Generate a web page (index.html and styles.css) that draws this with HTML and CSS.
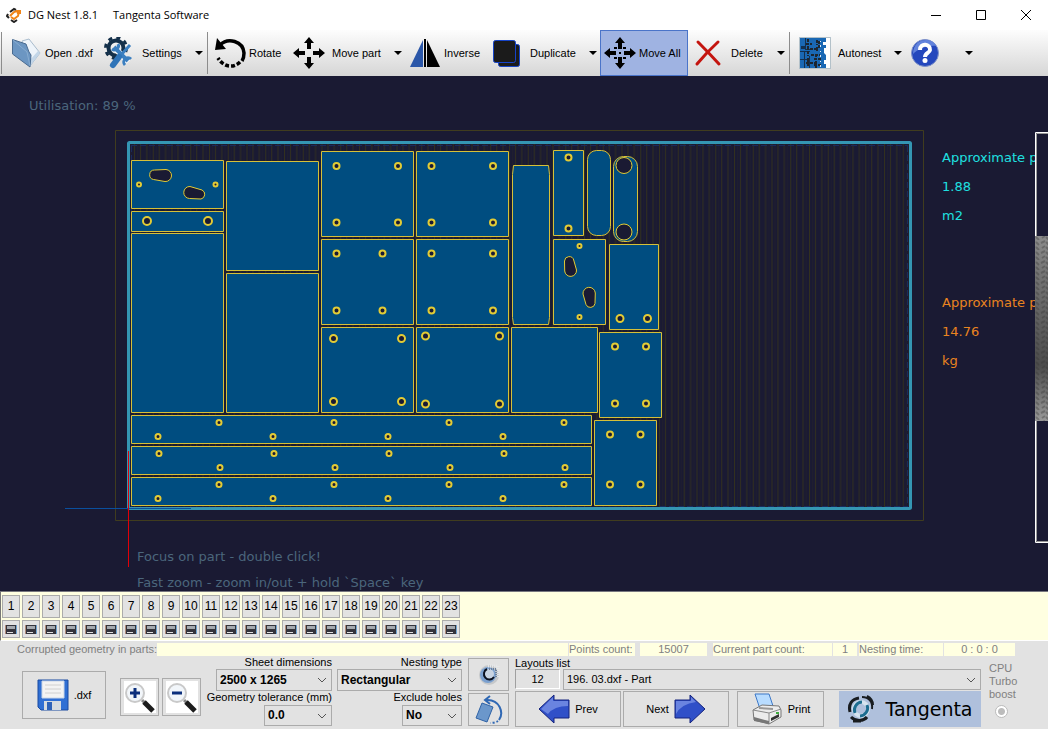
FILE: index.html
```html
<!DOCTYPE html>
<html lang="en">
<head>
  <meta charset="utf-8">
  <title>DG Nest 1.8.1</title>
  <link rel="stylesheet" href="styles.css">
</head>
<body>

<!-- shared symbols -->
<svg class="defs" aria-hidden="true">
  <symbol id="disk" viewBox="0 0 12 9">
    <path d="M0 0h12v9H0z" fill="#34343c"/>
    <path d="M2 1h8v3H2z" fill="#a4a8ae"/>
    <path d="M2 7h6v1H2z" fill="#e0e0e0"/>
    <path d="M0 0h1v9H0z" fill="#b08a78"/>
    <path d="M11 0h1v9h-1z" fill="#6fa3cf"/>
  </symbol>
  <symbol id="move" viewBox="0 0 32 32">
    <path d="M16 0l5 6h-3v6h-4V6h-3zM16 32l5-6h-3v-6h-4v6h-3zM0 16l6-5v3h6v4H6v3zM32 16l-6-5v3h-6v4h6v3z"/>
  </symbol>
</svg>

<header class="titlebar">
  <svg class="logo" width="16" height="16" viewBox="0 0 16 16">
    <path d="M4 5l4-3 2 1M2 7l-1 2 2 2M5 13l3 2 3-2" fill="none" stroke="#222" stroke-width="2"/>
    <path d="M4 9l4-4 3-1M13 5l-1 4-4 3-3-2" fill="none" stroke="#f08418" stroke-width="2"/>
    <path d="M10 3h5v4h-4z" fill="#f08418"/>
  </svg>
  <h1>DG Nest 1.8.1</h1>
  <span class="vendor">Tangenta Software</span>
  <div class="win">
    <button aria-label="Minimize"><svg width="12" height="12"><path d="M1 6.500h10" stroke="#000"/></svg></button>
    <button aria-label="Maximize"><svg width="12" height="12"><path d="M1.500 1.500h9v9h-9z" fill="none" stroke="#000"/></svg></button>
    <button aria-label="Close"><svg width="12" height="12"><path d="M1 1l10 10M11 1L1 11" stroke="#000"/></svg></button>
  </div>
</header>

<nav class="toolbar">
  <i class="sep"></i>
  <div class="tool open">
    <button class="tight">
      <svg width="32" height="32" viewBox="0 0 32 32">
        <path d="M12 4l7-2 11 14-10 13z" fill="#eef4fa" stroke="#a9bccd"/>
        <path d="M20 29l10-13-2-2-8 9z" fill="#c3d6e8"/>
        <path d="M2.500 2.500L10 5l6 2 3 8 2 3-1 12L2.500 17z" fill="#6c96c2" stroke="#4a6b90"/>
        <path d="M3 3l14 12 3 14" fill="none" stroke="#88acd0"/>
      </svg>
      Open .dxf
    </button>
  </div>
  <div class="tool settings">
    <button>
      <svg width="32" height="32" viewBox="0 0 32 32">
        <circle cx="13" cy="11" r="7.500" fill="none" stroke="#14304a" stroke-width="4"/>
        <circle cx="13" cy="11" r="10.500" fill="none" stroke="#14304a" stroke-width="3" stroke-dasharray="4 4.250"/>
        <path d="M12 11l13 14" stroke="#fff" stroke-width="6"/>
        <path d="M11 10l14 14" stroke="#3b7fc0" stroke-width="4"/>
        <path d="M9 12a4 4 0 0 0 6-5M22 28a4 4 0 0 1 6-6" fill="none" stroke="#3b7fc0" stroke-width="3"/>
        <path d="M27 8l-9 10" stroke="#3b7fc0" stroke-width="3"/>
        <path d="M16 20l-6 8" stroke="#2f74b8" stroke-width="6" stroke-linecap="round"/>
      </svg>
      Settings
    </button>
    <button class="drop" aria-label="Settings options"></button>
  </div>
  <i class="sep"></i>
  <div class="tool rotate">
    <button class="tight">
      <svg width="32" height="32" viewBox="0 0 32 32">
        <path d="M6 8c8-8 23-4 24 8q0 5-2 8" fill="none" stroke="#000" stroke-width="3.500"/>
        <path d="M3 1l9 11-11 1z"/>
        <path d="M26 25c-6 6-16 6-22-4" fill="none" stroke="#000" stroke-width="3.500" stroke-dasharray="4 2"/>
      </svg>
      Rotate
    </button>
  </div>
  <div class="tool move">
    <button><svg width="32" height="32"><use href="#move"/></svg>Move part</button>
    <button class="drop" aria-label="Move options"></button>
  </div>
  <div class="tool inverse">
    <button class="tight">
      <svg width="32" height="32" viewBox="0 0 32 32">
        <path d="M14 3v27H1z" fill="#2a56a8"/>
        <path d="M15 2h2v28h-2z"/>
        <path d="M18 3l13 27H18z"/>
      </svg>
      Inverse
    </button>
  </div>
  <div class="tool duplicate">
    <button>
      <svg width="32" height="32" viewBox="0 0 32 32">
        <rect x="7.500" y="7.500" width="21" height="22" rx="2" fill="#1b1b1b" stroke="#1644c8"/>
        <rect x="2.500" y="3.500" width="22" height="22" rx="2" fill="#1b1b1b" stroke="#1644c8"/>
      </svg>
      Duplicate
    </button>
    <button class="drop" aria-label="Duplicate options"></button>
  </div>
  <div class="tool moveall active">
    <button class="tight">
      <svg width="32" height="32" viewBox="0 0 32 32">
        <use href="#move"/>
        <path d="M12 12h8v8h-8z" fill="#9fb3e2"/>
        <path d="M15 15h2v2h-2zM10 10h3v2h-3zM19 10h3v2h-3zM10 20h3v2h-3zM19 20h3v2h-3z"/>
      </svg>
      Move All
    </button>
  </div>
  <div class="tool delete">
    <button>
      <svg width="32" height="32" viewBox="0 0 32 32"><path d="M6 5q11 11 21 22M26 5Q15 15 5 27" fill="none" stroke="#c4150f" stroke-width="3" stroke-linecap="round"/></svg>
      Delete
    </button>
    <button class="drop" aria-label="Delete options"></button>
  </div>
  <i class="sep"></i>
  <div class="tool autonest">
    <button>
      <svg width="32" height="32" viewBox="0 0 32 32">
        <path d="M.5.5h31v31H.5z" fill="#1a68b4" stroke="#b3c1c9"/>
        <path d="M27 1h4v30h-4v-4h-2v-4h2v-5l-2-2v-5h2V8h-3V5h3z" fill="#fff"/>
        <path d="M2 9h4v3H2zM6 1h1v11h4v1H6zM1 14h10v1H1zM5 15h1v16H5zM1 22h9v1H1zM10 19h1v12h-1z" fill="#14304f"/>
        <path d="M9 2v28M18 3v12M17 17v14" stroke="#1d2630" stroke-width="2" stroke-dasharray="3 1 1 2 4 1"/>
        <path d="M7 7h6M11 12h7M12 18h9M7 26h11M15 22h8M15 28h7M20 4v7" stroke="#1d2630" stroke-width="2" stroke-dasharray="3 1"/>
        <path d="M21.500 4v26" stroke="#dfe9f2" stroke-dasharray="1 3 2 4"/>
      </svg>
      Autonest
    </button>
    <button class="drop" aria-label="Autonest options"></button>
  </div>
  <div class="tool help">
    <button aria-label="Help">
      <svg width="32" height="32" viewBox="0 0 32 32">
        <circle cx="16" cy="16" r="13.500" fill="#2548bd" stroke="#8093c9"/>
        <path d="M4 17C4 0 24 0 27 9 18 8 9 12 4 17z" fill="#6283dc"/>
        <path d="M11 13c0-8 11-6 10 0-.5 3-5 3-5 7" fill="none" stroke="#fff" stroke-width="4"/>
        <circle cx="16" cy="23.500" r="2.500" fill="#fff"/>
      </svg>
    </button>
    <button class="drop" aria-label="Help options"></button>
  </div>
</nav>

<main class="stage">
  <svg viewBox="0 76 1048 514" preserveAspectRatio="xMinYMin meet">
    <defs>
      <pattern id="ribs" x="134" y="0" width="18.750" height="10" patternUnits="userSpaceOnUse">
        <path d="M.5 0v10M6.500 0v10M12.800 0v10" stroke="#32301f"/>
        <path d="M3.500 0v10M16 0v10" stroke="#1f1e2e"/>
      </pattern>
      <linearGradient id="steel" x1="0" y1="0" x2="0" y2="1">
        <stop offset="0" stop-color="#8c8c8c"/><stop offset=".2" stop-color="#747474"/>
        <stop offset=".7" stop-color="#4c4c4c"/><stop offset="1" stop-color="#989898"/>
      </linearGradient>
      <pattern id="tread" width="10" height="10" patternUnits="userSpaceOnUse">
        <path d="M1 3l4-2M6 2l3 3M2 8l3-2M6 7l3 3" stroke="#333" stroke-opacity=".35" stroke-width="2"/>
      </pattern>
    </defs>

    <!-- sheet -->
    <path d="M115.500 130.500h808v390h-808z" fill="none" stroke="#403c1e"/>
    <path d="M130 144h779v363H130z" fill="url(#ribs)"/>
    <path d="M131 145.500h777M907.500 146v361M131.500 146v361M660 506.500h248" fill="none" stroke="#1a2b5c" stroke-dasharray="6 3"/>
    <rect x="128.500" y="142.500" width="782" height="366" rx="1" fill="none" stroke="#3496b3" stroke-width="3"/>

    <!-- parts -->
    <g class="part">
      <path d="M131.500 160.500h92v48h-92zM131.500 211.500h92v20h-92zM131.500 233.500h92v179h-92z"/>
      <path d="M226.500 161.500h92v109h-92zM226.500 273.500h92v139h-92z"/>
      <path d="M321.500 151.500h92v85h-92zM321.500 239.500h92v85h-92zM321.500 327.500h92v85h-92z"/>
      <path d="M416.500 151.500h92v85h-92zM416.500 239.500h92v85h-92zM416.500 327.500h92v85h-92z"/>
      <path d="M513.500 165.500h35l1 9v143l-1 7h-35l-1-7v-143z"/>
      <path d="M511.500 327.500h86v85h-86z"/>
      <path d="M553.500 150.500h30v85h-30zM553.500 239.500h52v85h-52z"/>
      <rect x="587.500" y="150.500" width="23" height="85" rx="9"/>
      <rect x="613.500" y="156.500" width="24" height="85" rx="10"/>
      <path d="M609.500 244.500h49v85h-49zM599.500 332.500h62v85h-62zM594.500 420.500h62v85h-62z"/>
      <path d="M131.500 415.500h460v28h-460zM131.500 446.500h460v28h-460zM131.500 477.500h460v28h-460z"/>
    </g>

    <!-- cutouts -->
    <g class="cut">
      <path d="M154.500 170l11.500-.5a6 6 0 0 1-1 12l-11.500-2a4.800 4.800 0 0 1 1-9.500z"/>
      <path d="M190 186.500l12 3.500a4.800 4.800 0 0 1-1 9l-11.500-.5a6 6 0 0 1 .5-12z"/>
      <path d="M564.500 261a4.700 4.700 0 0 1 9.200-1l2.800 10a5.800 5.800 0 0 1-11.800 1z"/>
      <path d="M583 294a6 6 0 0 1 12.300-1l-.3 10.500a4.700 4.700 0 0 1-9 1z"/>
      <circle cx="624" cy="165.500" r="8"/>
      <circle cx="624" cy="232" r="8"/>
    </g>
    <g class="cut holes"></g>

    <!-- origin -->
    <path d="M65 508.500h126" stroke="#0a4f9e"/>
    <path d="M128.500 451v116" stroke="#e00008"/>

    <g class="note">
      <text x="29" y="110">Utilisation: 89 %</text>
      <text x="137" y="561">Focus on part - double click!</text>
      <text x="137" y="587">Fast zoom - zoom in/out + hold `Space` key</text>
    </g>
    <g class="note area">
      <text x="942" y="162">Approximate pa</text>
      <text x="942" y="191">1.88</text>
      <text x="942" y="220">m2</text>
    </g>
    <g class="note weight">
      <text x="942" y="307">Approximate pa</text>
      <text x="942" y="336">14.76</text>
      <text x="942" y="365">kg</text>
    </g>

    <!-- side preview -->
    <path d="M1035 132h20v411h-20z" fill="#1a1a33"/>
    <path d="M1055 132.500h-19.500v410h19.500" fill="none" stroke="#fff"/>
    <path d="M1055 133.500h-18.500v408h18.500" fill="none" stroke="#999"/>
    <path d="M1035 236h20v185h-20z" fill="url(#steel)"/>
    <path d="M1035 236h20v185h-20z" fill="url(#tread)"/>
  </svg>
</main>

<section class="strip">
  <div class="cells numbers"></div>
  <div class="cells disks"></div>
</section>

<footer class="panel">
  <div class="status">
    <span class="caption">Corrupted geometry in parts:</span>
    <output class="bad" aria-label="Corrupted geometry"></output>
    <span class="field points">Points count:</span>
    <output class="field pointsval">15007</output>
    <span class="field current">Current part count:</span>
    <output class="field currentval">1</output>
    <span class="field time">Nesting time:</span>
    <output class="field timeval">0 : 0 : 0</output>
  </div>

  <div class="controls">
    <button class="btn save">
      <svg width="32" height="32" viewBox="0 0 32 32">
        <path d="M1 1h30v30H4l-3-3z" fill="#2f6fd4" stroke="#1b4ba0"/>
        <path d="M5 2h22v17H5z" fill="#f3f3f3" stroke="#c9d6e8"/>
        <path d="M8 6h16M8 10h16M8 14h16" stroke="#d0d0d0"/>
        <path d="M7 22h17v9H7z" fill="#d5dbe0"/>
        <path d="M10 23h5v8h-5z" fill="#2d62b8"/>
      </svg>
      .dxf
    </button>

    <div class="zooms">
      <button class="btn" aria-label="Zoom in">
        <svg width="32" height="32" viewBox="0 0 32 32">
          <path d="M0 0h32v32H0z" fill="#fff"/>
          <path d="M18 19l3 3" stroke="#888" stroke-width="3"/>
          <path d="M20 21l9 9" stroke="#1c1c1c" stroke-width="5"/>
          <circle cx="11" cy="12" r="9" fill="#f2f6fa" stroke="#c9c9c9" stroke-width="2"/>
          <path d="M6 12h10M11 7v10" stroke="#0c2f7c" stroke-width="3"/>
        </svg>
      </button>
      <button class="btn" aria-label="Zoom out">
        <svg width="32" height="32" viewBox="0 0 32 32">
          <path d="M0 0h32v32H0z" fill="#fff"/>
          <path d="M18 19l3 3" stroke="#888" stroke-width="3"/>
          <path d="M20 21l9 9" stroke="#1c1c1c" stroke-width="5"/>
          <circle cx="11" cy="12" r="9" fill="#f2f6fa" stroke="#c9c9c9" stroke-width="2"/>
          <path d="M6 12h10" stroke="#0c2f7c" stroke-width="3"/>
        </svg>
      </button>
    </div>

    <div class="options sheet">
      <label for="dims">Sheet dimensions</label>
      <select id="dims"><option>2500 x 1265</option></select>
      <label for="tol">Geometry tolerance (mm)</label>
      <select id="tol" class="short"><option>0.0</option></select>
    </div>

    <div class="options nesting">
      <label for="type">Nesting type</label>
      <select id="type"><option>Rectangular</option></select>
      <label for="holes">Exclude holes</label>
      <select id="holes" class="short"><option>No</option></select>
    </div>

    <div class="modes">
      <button class="btn" aria-label="Hole mode">
        <svg width="24" height="24" viewBox="0 0 24 24">
          <circle cx="12" cy="12" r="10" fill="#c6c8ca"/>
          <circle cx="11" cy="12" r="8" fill="#7ba0cf"/>
          <circle cx="12" cy="11" r="5" fill="#c9d4e2"/>
          <path d="M10 6a5.500 5.500 0 1 0 7 8" fill="none" stroke="#0c1220" stroke-width="2"/>
          <path d="M11 3h10v11" fill="none" stroke="#e6e8ea" stroke-width="3" stroke-dasharray="1 1"/>
          <path d="M12 6h7v8" fill="none" stroke="#6b7f99" stroke-width="2" stroke-dasharray="1 1"/>
        </svg>
      </button>
      <button class="btn" aria-label="Rotate part">
        <svg width="30" height="30" viewBox="0 0 30 30">
          <path d="M8 8l11 4-6 15-11-4z" fill="#6b97cb" stroke="#2f62a5"/>
          <path d="M12 5c14-1 18 13 13 20" fill="none" stroke="#2f68b4" stroke-width="2"/>
          <path d="M16 1l-5 4 5 4" fill="none" stroke="#2f68b4" stroke-width="2"/>
          <path d="M24 26q-3 2-8 2" fill="none" stroke="#2f68b4" stroke-width="2" stroke-dasharray="2 2"/>
        </svg>
      </button>
    </div>

    <div class="layouts">
      <label for="layout">Layouts list</label>
      <div class="list">
        <input type="text" value="12" aria-label="Layout number">
        <select id="layout"><option>196. 03.dxf - Part</option></select>
      </div>
      <div class="actions">
        <button class="btn step">
          <svg width="32" height="30" viewBox="0 0 32 30">
            <path d="M1 15L16 1v5h15v18H16v5z" fill="#3050c8" stroke="#15237c"/>
            <path d="M3 15L15 3v4h15v5q-14 0-20 8z" fill="#6a84e0"/>
          </svg>
          Prev
        </button>
        <button class="btn step">
          Next
          <svg width="32" height="30" viewBox="0 0 32 30">
            <path d="M31 15L16 1v5H1v18h15v5z" fill="#3050c8" stroke="#15237c"/>
            <path d="M2 7h15V3l5 5Q7 10 2 20z" fill="#6a84e0"/>
          </svg>
        </button>
        <button class="btn print">
          <svg width="32" height="32" viewBox="0 0 32 32">
            <path d="M4 1h14l4 12-13 3z" fill="#b8dcff" stroke="#3d78c8"/>
            <path d="M2 17l9-5 17 1 2 4v7L18 31 3 27z" fill="#ececec" stroke="#777"/>
            <path d="M2 17l16 3 12-4M18 20v11" fill="none" stroke="#888"/>
            <path d="M3 24l15 4v3L3 28z" fill="#777"/>
            <path d="M20 25l8-4v3l-8 4z" fill="#333"/>
            <path d="M8 15l14 1" stroke="#999" stroke-width="2"/>
            <path d="M25 20h3" stroke="#3dab3d" stroke-width="2"/>
          </svg>
          Print
        </button>
        <a class="brand" href="#">
          <svg width="28" height="28" viewBox="0 0 28 28">
            <circle cx="14" cy="14" r="7" fill="none" stroke="#d6e4ef" stroke-width="4"/>
            <path d="M8 18a8 8 0 0 1 7-11M20 10a8 8 0 0 1-7 11" fill="none" stroke="#1d6d90" stroke-width="3"/>
            <path d="M3 17C1 9 5 4 12 3" fill="none" stroke="#181c20" stroke-width="3"/>
            <path d="M15 2c7 0 11 5 10 12M20 1c4 2 6 5 6 9" fill="none" stroke="#181c20" stroke-width="2"/>
            <path d="M4 22c5 5 13 4 16 0M6 26h8" fill="none" stroke="#181c20" stroke-width="3"/>
          </svg>
          Tangenta
        </a>
      </div>
    </div>

    <label class="turbo">
      CPU<br>Turbo<br>boost
      <input type="radio" checked disabled>
    </label>
  </div>
</footer>

<script>

// [x, y, radius]
var holes = [
  [139, 184.5, 2], [215.5, 184.5, 2], [147, 221, 4], [208, 221, 4],
  [336.5, 166, 3], [398, 166, 3], [336.5, 222.5, 3], [398, 222.5, 3],
  [336.5, 253.5, 3], [382.5, 253.5, 3], [336.5, 310.5, 3], [382.5, 310.5, 3],
  [333.5, 338.5, 3.5], [401.5, 338.5, 3.5], [333.5, 401.5, 3.5], [401.5, 401.5, 3.5],
  [431.5, 166, 3], [493, 166, 3], [431.5, 222.5, 3], [493, 222.5, 3],
  [431.5, 253.5, 3], [493, 253.5, 3], [431.5, 310.5, 3], [493, 310.5, 3],
  [425.5, 336, 3.5], [499.5, 336, 3.5], [425.5, 404, 3.5], [499.5, 404, 3.5],
  [568.5, 157.5, 3], [568.5, 228.5, 3], [579.5, 246, 2], [579.5, 317, 2],
  [620, 318.5, 3.5], [647.5, 318.5, 3.5],
  [615, 346.5, 3], [646, 346.5, 3], [615, 403.5, 3], [646, 403.5, 3],
  [610, 434.5, 3], [640.5, 434.5, 3], [610, 484.5, 3], [640.5, 484.5, 3]
];

// long bars, four holes on each edge
for (var i = 0; i < 4; i++) {
  var x = i * 115;
  holes.push([219 + x, 422.5, 2.5], [158 + x, 436.5, 2.5]);
  holes.push([159 + x, 453.5, 2.5], [220 + x, 467.5, 2.5]);
  holes.push([219 + x, 484.5, 2.5], [158 + x, 498.5, 2.5]);
}

document.querySelector('.holes').innerHTML = holes.map(function(h){
  return '<circle cx="' + h[0] + '" cy="' + h[1] + '" r="' + h[2] + '"/>';
}).join('');

var numbers = '', disks = '';
for (var n = 1; n <= 23; n++) {
  numbers += '<button>' + n + '</button>';
  disks += '<button aria-label="Save part ' + n + '"><svg width="12" height="9"><use href="#disk"/></svg></button>';
}
document.querySelector('.numbers').innerHTML = numbers;
document.querySelector('.disks').innerHTML = disks;

</script>

</body>
</html>
```
FILE: styles.css
```css
* {
  box-sizing: border-box;
}
body {
  margin: 0;
  height: 100vh;
  display: flex;
  flex-direction: column;
  overflow: hidden;
  background: #e2e2e2;
  color: #000;
  font: 11px/13px "Liberation Sans", Arial, sans-serif;
}
button,
input,
select {
  font: inherit;
  color: inherit;
  margin: 0;
  padding: 0;
  border: 0;
  border-radius: 0;
  background: none;
}
svg {
  display: block;
  flex: none;
}
.defs {
  position: absolute;
  width: 0;
  height: 0;
}

/* title bar */
.titlebar {
  display: flex;
  align-items: center;
  height: 30px;
  padding-left: 6px;
  background: #fff;
  font: 11px/16px "Open Sans", "Noto Sans", sans-serif;
}
.titlebar h1 {
  margin: 0 15px 0 6px;
  font: inherit;
}
.win {
  display: flex;
  margin-left: auto;
}
.win button {
  width: 45px;
  height: 28px;
  display: flex;
  justify-content: center;
  align-items: center;
}

/* toolbar */
.toolbar {
  display: flex;
  height: 46px;
  background: linear-gradient(#fdfdfd, #d6d6d6);
}
.sep {
  width: 1px;
  height: 42px;
  margin: 2px 0 0 1px;
  background: #8c8c8c;
}
.tool {
  display: flex;
  justify-content: space-between;
  padding-left: 4px;
  white-space: nowrap;
}
.tool button {
  display: flex;
  align-items: center;
  gap: 7px;
}
.tool .tight {
  gap: 3px;
}
.tool .drop {
  width: 14px;
  justify-content: center;
}
.drop:after {
  content: '';
  border: 4px solid transparent;
  border-top-color: #000;
  border-bottom: 0;
}
.open {
  width: 97px;
  padding-left: 8px;
}
.settings {
  width: 107px;
}
.rotate {
  width: 81px;
  padding-left: 6px;
}
.move {
  width: 116px;
}
.inverse {
  width: 80px;
}
.duplicate {
  width: 115px;
  padding-left: 6px;
}
.moveall {
  width: 88px;
}
.delete {
  width: 100px;
}
.autonest {
  width: 115px;
  padding-left: 9px;
}
.help {
  width: 71px;
}
.tool.active {
  padding-left: 3px;
  border: 1px solid #4a74c9;
  background: #9fb3e2;
}

/* drawing area */
.stage {
  flex: 1;
  min-height: 0;
  background: #1a1a33;
  border-bottom: 1px solid #77777f;
}
.stage svg {
  width: 100%;
  height: 100%;
}
.part {
  fill: #004d80;
  stroke: #d6c038;
}
.cut {
  fill: #1a1a33;
  stroke: #e2cb35;
}
.holes {
  stroke-width: 2px;
}
.note {
  font: 13px "DejaVu Sans", Verdana, sans-serif;
  fill: #4b667c;
}
.area {
  fill: #1fe0e0;
}
.weight {
  fill: #ea8420;
}

/* part strip */
.strip {
  display: grid;
  gap: 2px;
  padding: 3px 1px 2px;
  background: #ffffe1;
  border-left: 1px solid #777;
  border-bottom: 1px solid #fff;
}
.cells {
  display: flex;
  gap: 2px;
}
.cells button {
  width: 18px;
  height: 23px;
  display: flex;
  justify-content: center;
  align-items: center;
  background: #e2e2e2;
  border: 1px solid #ababab;
  font-size: 12px;
}
.disks button {
  height: 18px;
}

/* bottom panel */
.panel {
  padding: 2px 0;
}
.status {
  display: flex;
  height: 13px;
  margin-right: 33px;
  padding-left: 17px;
  color: #808080;
  white-space: nowrap;
}
.caption {
  width: 140px;
}
.bad {
  flex: 1;
  background: #ffffe1;
}
.field {
  margin-left: 1px;
  background: #ffffe1;
}
.points {
  width: 66px;
}
.pointsval {
  width: 67px;
  margin-left: 5px;
  text-align: center;
}
.current {
  width: 119px;
  margin-left: 6px;
}
.currentval {
  width: 24px;
  text-align: center;
}
.time {
  width: 84px;
  margin-left: 2px;
}
.timeval {
  width: 71px;
  text-align: center;
}
.controls {
  display: flex;
  height: 71px;
  padding-left: 22px;
}
.btn {
  display: flex;
  justify-content: center;
  align-items: center;
  gap: 5px;
  background: #e2e2e2;
  border: 1px solid #ababab;
}
.save {
  width: 84px;
  height: 48px;
  margin-top: 15px;
}
.zooms {
  display: flex;
  gap: 3px;
  margin: 22px 15px 0 14px;
}
.zooms .btn {
  width: 39px;
  height: 38px;
}
.options {
  display: grid;
  grid-template-columns: 100%;
  grid-template-rows: 13px 22px 14px 21px;
  justify-items: end;
  white-space: nowrap;
}
.options label {
  justify-self: stretch;
  display: flex;
  justify-content: flex-end;
}
.sheet {
  width: 116px;
}
.nesting {
  width: 125px;
  margin: 0 6px 0 5px;
}
select {
  width: 100%;
  height: 100%;
  padding-left: 3px;
  appearance: none;
  border: 1px solid #ababab;
  background: #e2e2e2 url("data:image/svg+xml,%3Csvg xmlns='http://www.w3.org/2000/svg' width='10' height='6'%3E%3Cpath d='M1 1l4 4 4-4' fill='none' stroke='%23555'/%3E%3C/svg%3E") no-repeat right 4px center;
}
.options select {
  font-size: 12px;
  font-weight: bold;
}
.sheet .short {
  width: 68px;
}
.nesting .short {
  width: 60px;
}
.modes {
  display: grid;
  gap: 2px;
  margin: 2px 6px 2px 0;
  grid-template-rows: 33px 33px;
}
.modes .btn {
  width: 41px;
}
.layouts {
  flex: 1;
  display: grid;
  grid-template-rows: 13px 21px 37px;
  align-content: start;
}
.layouts label {
  padding-top: 1px;
}
.list {
  display: flex;
  gap: 3px;
}
.list input {
  width: 45px;
  height: 20px;
  text-align: center;
  border: 1px solid;
  border-color: #a0a0a0 #fff #fff #a0a0a0;
}
.list select {
  flex: 1;
  width: auto;
}
.actions {
  display: flex;
  gap: 2px;
  padding-top: 1px;
}
.step {
  width: 106px;
}
.print {
  width: 87px;
  margin-left: 6px;
}
.brand {
  flex: 1;
  display: flex;
  justify-content: center;
  align-items: center;
  gap: 10px;
  margin-left: 13px;
  background: #afc0dc;
  color: #000;
  font: 19px/22px "DejaVu Sans", Verdana, sans-serif;
  text-decoration: none;
}
.turbo {
  width: 67px;
  padding: 6px 0 0 8px;
  color: #808080;
}
.turbo input {
  display: block;
  width: 13px;
  height: 13px;
  margin: 4px 0 0 6px;
  appearance: none;
  border: 1px solid #bcbcbc;
  border-radius: 50%;
  background: radial-gradient(#bcbcbc 3px, #fff 4px);
}
```
